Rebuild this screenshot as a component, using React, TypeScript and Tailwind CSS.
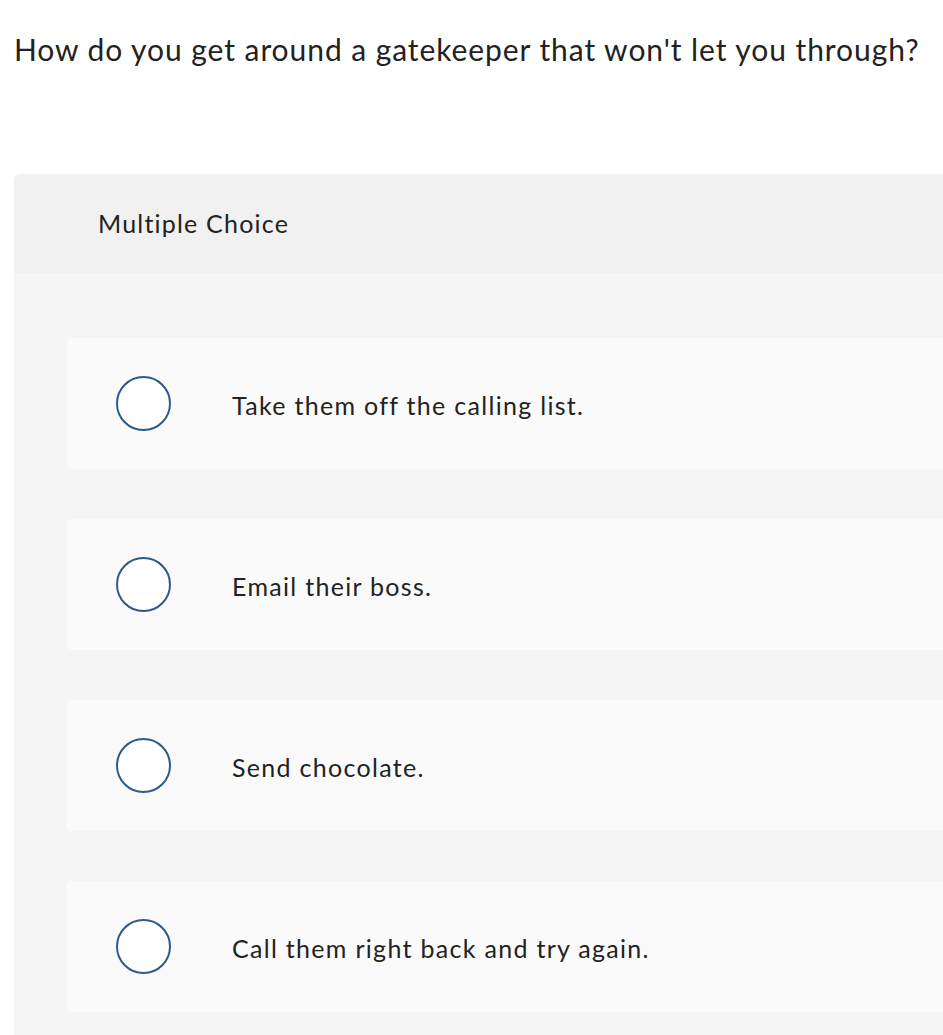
import React from "react";

const options = [
  "Take them off the calling list.",
  "Email their boss.",
  "Send chocolate.",
  "Call them right back and try again.",
];

export default function App() {
  return (
    <div
      className="w-[943px] h-[1035px] overflow-hidden bg-white text-[#222222]"
      style={{ fontFamily: "Lato, 'Open Sans', sans-serif" }}
    >
      <div className="pt-[29px] pl-[14px] h-[174px]">
        <h1 className="text-[30px] leading-[40px] whitespace-nowrap tracking-[0.93px]">
          How do you get around a gatekeeper that won't let you through?
        </h1>
      </div>
      <div className="ml-[14px] w-[1000px] rounded-tl-[6px] overflow-hidden bg-[#f5f5f5]">
        <div className="h-[99px] bg-[#f1f1f1] flex items-center pl-[84px]">
          <span className="text-[25px] tracking-[1.2px]">Multiple Choice</span>
        </div>
        <div className="pt-[65px] pl-[52px] flex flex-col gap-[50px] pb-[40px]">
          {options.map((o) => (
            <div
              key={o}
              className="h-[131px] bg-[#fafafa] rounded-l-[6px] flex items-center pl-[50px]"
            >
              <div className="w-[55px] h-[55px] rounded-full border-2 border-[#2d5a8b] bg-white shrink-0" />
              <span className="ml-[61px] text-[25px] leading-[34px] pt-[2px] tracking-[1.3px] whitespace-nowrap">{o}</span>
            </div>
          ))}
        </div>
      </div>
    </div>
  );
}
